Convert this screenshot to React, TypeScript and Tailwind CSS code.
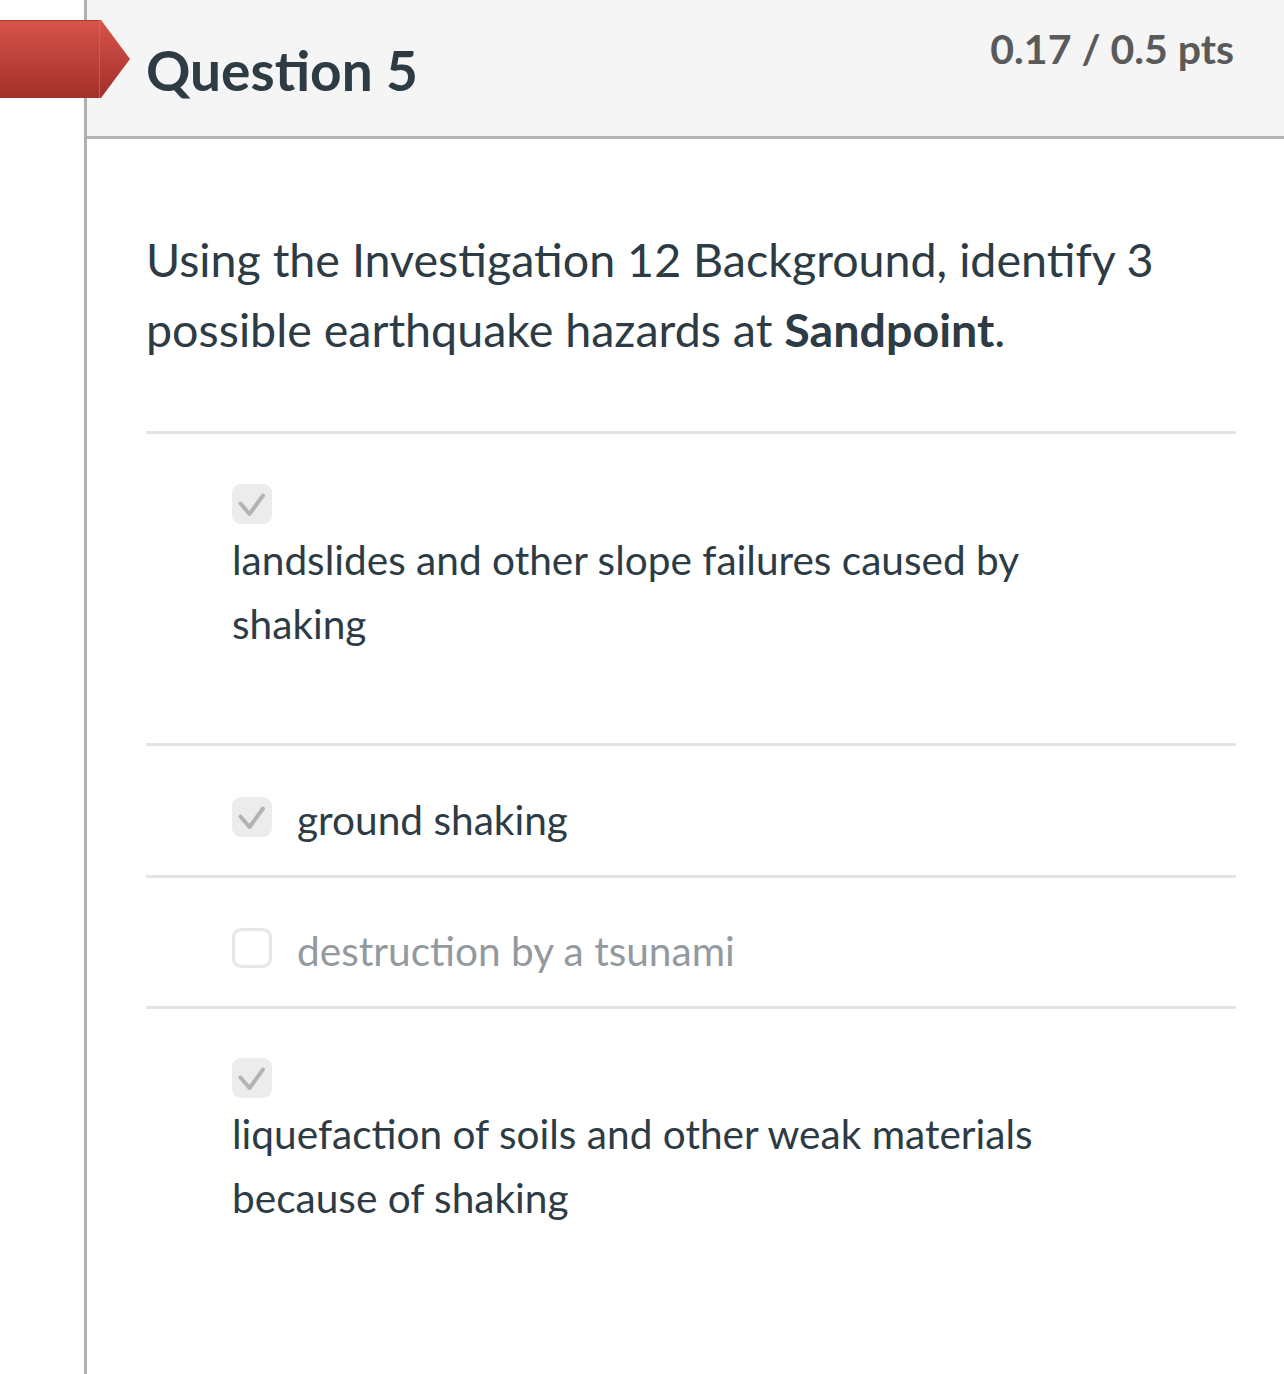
import React from "react";

function CheckBox({ checked }: { checked: boolean }) {
  if (!checked) {
    return (
      <div className="w-10 h-10 shrink-0 rounded-[9px] border-[3px] border-[#e6e6e6] bg-white box-border" />
    );
  }
  return (
    <div className="w-10 h-10 shrink-0 rounded-[9px] bg-[#ececec] flex items-center justify-center">
      <svg width="40" height="40" viewBox="0 0 40 40" fill="none">
        <path
          d="M8.5 19.5 L17.5 30 L31 11.5"
          stroke="#b3b3b3"
          strokeWidth="4"
          strokeLinecap="round"
          strokeLinejoin="round"
        />
      </svg>
    </div>
  );
}

export default function App() {
  return (
    <div className="relative w-full min-h-[1374px] bg-white font-['Lato','Noto_Sans',sans-serif] text-[#2d3b45]">
      {/* red banner */}
      <div className="absolute left-0 top-[20px] h-[78px] w-[131px] z-10">
        <svg width="131" height="78" viewBox="0 0 131 78">
          <defs>
            <linearGradient id="rg" x1="0" y1="0" x2="0" y2="1">
              <stop offset="0" stopColor="#d7544c" />
              <stop offset="1" stopColor="#a3302a" />
            </linearGradient>
          </defs>
          <path d="M0 0 H101 L130 39 L101 78 H0 Z" fill="url(#rg)" />
          <path d="M0 0.5 H101" stroke="#b8392f" strokeWidth="1" />
          <path d="M99.5 0 V78" stroke="#e06a62" strokeWidth="1" opacity="0.6" />
        </svg>
      </div>

      <div className="ml-[84px] border-l-[3px] border-[#b0b0b0] min-h-[1374px]">
        {/* header */}
        <div className="h-[139px] box-border bg-[#f5f5f5] border-b-[3px] border-[#b3b3b3] pl-[59px] pr-[50px] pt-[27px] flex justify-between items-start">
          <div className="mt-[16px] text-[55px] leading-none font-bold text-[#2d3b45]">
            Question 5
          </div>
          <div className="mt-[1px] text-[41px] leading-none font-bold text-[#5a5a5a]">
            0.17 / 0.5 pts
          </div>
        </div>

        {/* body */}
        <div className="pl-[59px] pr-[48px]">
          <div className="pt-[85px] pb-[67px] text-[46.6px] leading-[70px] whitespace-nowrap">
            Using the Investigation 12 Background, identify 3
            <br />
            possible earthquake hazards at <b className="font-bold">Sandpoint</b>.
          </div>

          {/* answer 1 */}
          <div className="border-t-[3px] border-[#e4e4e4] pl-[86px] pt-[50px] pb-[88px]">
            <CheckBox checked />
            <div className="mt-[4px] text-[40.6px] leading-[63.5px] whitespace-nowrap">
              landslides and other slope failures caused by
              <br />
              shaking
            </div>
          </div>

          {/* answer 2 */}
          <div className="border-t-[3px] border-[#e4e4e4] pl-[86px] pt-[51px] pb-[38px]">
            <div className="h-10 flex items-center gap-[25px]">
              <CheckBox checked />
              <span className="pt-[5px] text-[40.6px] leading-[63.5px] whitespace-nowrap">ground shaking</span>
            </div>
          </div>

          {/* answer 3 */}
          <div className="border-t-[3px] border-[#e4e4e4] pl-[86px] pt-[50px] pb-[38px]">
            <div className="h-10 flex items-center gap-[25px]">
              <CheckBox checked={false} />
              <span className="pt-[5px] text-[40.6px] leading-[63.5px] whitespace-nowrap text-[#939a9f]">
                destruction by a tsunami
              </span>
            </div>
          </div>

          {/* answer 4 */}
          <div className="border-t-[3px] border-[#e4e4e4] pl-[86px] pt-[49px] pb-[40px]">
            <CheckBox checked />
            <div className="mt-[4px] text-[40.6px] leading-[63.5px] whitespace-nowrap">
              liquefaction of soils and other weak materials
              <br />
              because of shaking
            </div>
          </div>
        </div>
      </div>
    </div>
  );
}
